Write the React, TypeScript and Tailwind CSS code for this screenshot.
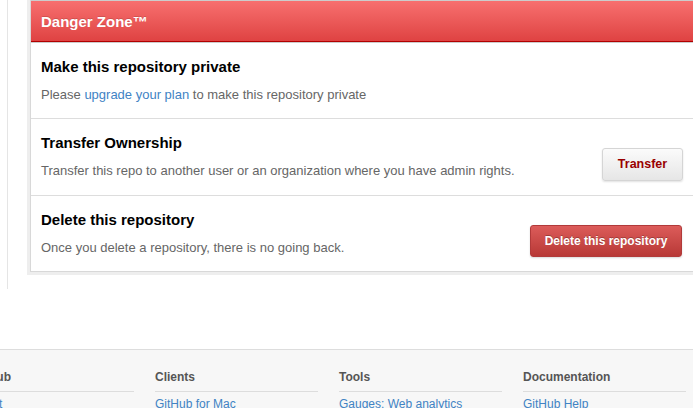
const rows = [
  {
    title: "Make this repository private",
    desc: (
      <>
        Please <a className="text-[#4183c4]">upgrade your plan</a> to make this repository private
      </>
    ),
    button: null as null | "transfer" | "delete",
  },
  {
    title: "Transfer Ownership",
    desc: <>Transfer this repo to another user or an organization where you have admin rights.</>,
    button: "transfer" as const,
  },
  {
    title: "Delete this repository",
    desc: <>Once you delete a repository, there is no going back.</>,
    button: "delete" as const,
  },
];

const footer = [
  { title: "GitHub", link: "About" },
  { title: "Clients", link: "GitHub for Mac" },
  { title: "Tools", link: "Gauges: Web analytics" },
  { title: "Documentation", link: "GitHub Help" },
];

export default function App() {
  return (
    <div className="w-[693px] h-[408px] overflow-hidden bg-white font-['Liberation_Sans',Arial,sans-serif]">
      <div className="flex h-[349px]">
        <div className="w-[8px] h-[289px] border-r border-[#e5e5e5] shrink-0" />
        <div className="ml-[19px] w-[670px] shrink-0 self-start border-x-[3px] border-b-[3px] border-[#eeeeee]">
          <div className="border-x border-b border-[#d8d8d8]">
            <div className="h-[42px] border-t border-[#cccccc] border-b border-b-[#b20000] bg-gradient-to-b from-[#f76f6f] to-[#df4242] px-[10px] flex items-center">
              <span className="text-white font-bold text-[15px] leading-none [text-shadow:0_-1px_0_rgba(0,0,0,0.15)]">
                Danger Zone™
              </span>
            </div>
            <div className="border-t border-[#cccccc]">
              {rows.map((r, i) => (
                <div
                  key={r.title}
                  className={`flex justify-between items-start pl-[10px] pr-[10px] pt-[15px] pb-[14px] ${
                    i < rows.length - 1 ? "border-b border-[#dddddd]" : ""
                  }`}
                >
                  <div>
                    <div className="text-[15px] leading-[18px] font-bold text-black">{r.title}</div>
                    <div className="mt-[10px] text-[13px] leading-[18px] text-[#666666]">{r.desc}</div>
                  </div>
                  {r.button === "transfer" && (
                    <button className="mt-[14px] w-[81px] h-[33px] rounded-[3px] border border-[#d5d5d5] bg-gradient-to-b from-[#fbfbfb] to-[#e6e6e6] shadow-[0_1px_2px_rgba(0,0,0,0.12)] text-[12.5px] font-bold text-[#990000]">
                      Transfer
                    </button>
                  )}
                  {r.button === "delete" && (
                    <button className="mt-[14px] mr-[1px] w-[152px] h-[32px] rounded-[3px] border border-[#b13a3a] bg-gradient-to-b from-[#dc5c5a] to-[#b83836] shadow-[0_1px_2px_rgba(0,0,0,0.15)] text-[12px] font-bold text-white [text-shadow:0_-1px_0_rgba(0,0,0,0.25)]">
                      Delete this repository
                    </button>
                  )}
                </div>
              ))}
            </div>
          </div>
        </div>
      </div>
      <div className="h-[59px] border-t border-[#dddddd] bg-[#f7f7f7]">
        <div className="flex gap-[21px] ml-[-29px] pt-[19px]">
          {footer.map((c) => (
            <div key={c.title} className="w-[163px] shrink-0">
              <div className="pb-[5px] border-b border-[#dddddd] text-[12px] leading-[17px] font-bold text-[#555555]">
                {c.title}
              </div>
              <div className="mt-[4px] text-[12px] leading-[17px] text-[#4183c4]">{c.link}</div>
            </div>
          ))}
        </div>
      </div>
    </div>
  );
}
